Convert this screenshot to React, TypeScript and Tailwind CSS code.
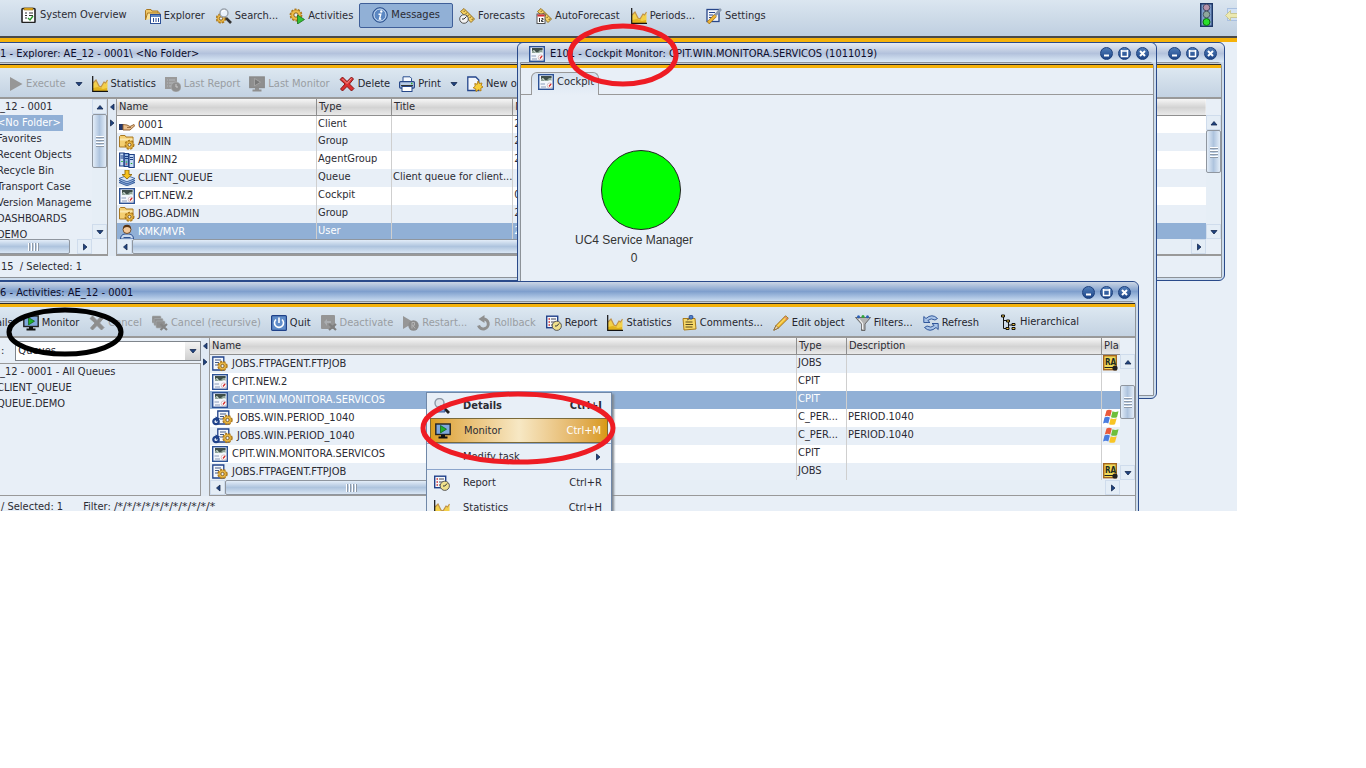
import type { ReactNode } from "react";
import clsx from "clsx";

/* ---------- icons ---------- */

function Svg({ children, w = 16, h = 16 }: { children: ReactNode; w?: number; h?: number }) {
  return (
    <svg width={w} height={h} viewBox={`0 0 ${w} ${h}`} fill="none" className="shrink-0" aria-hidden="true">
      {children}
    </svg>
  );
}

function Gear({ cx, cy, r = 4 }: { cx: number; cy: number; r?: number }) {
  return (
    <g>
      <circle cx={cx} cy={cy} r={r} stroke="#a8741a" strokeWidth="2.4" strokeDasharray="2 1.2" />
      <circle cx={cx} cy={cy} r={r - 0.2} fill="#eebc4a" stroke="#c28d22" strokeWidth="0.8" />
      <circle cx={cx} cy={cy} r={r / 2.4} fill="#e8eef5" stroke="#7a5513" strokeWidth="0.9" />
    </g>
  );
}

const OverviewIcon = () => (
  <Svg>
    <rect x="1" y="1.5" width="13" height="14" rx="1" fill="#fff" stroke="#222" strokeWidth="1.6" />
    <path d="M3 1h9v2H3z" fill="#f0b41c" stroke="#8a6410" strokeWidth=".6" />
    <path d="M4 6h2M8 6h4M4 8.5h2M8 8.5h4M4 11h2" stroke="#333" strokeWidth="1.2" />
    <path d="M7 11l2 2 3-4" stroke="#2b9a2b" strokeWidth="1.4" />
  </Svg>
);

const ExplorerIcon = () => (
  <Svg>
    <path d="M.5 12V2.5l1-1H6l1 1.5h6v3" fill="#f0c766" stroke="#a97822" />
    <path d="M.5 12l2-7H15l-1 4" fill="#fbe39a" stroke="#a97822" />
    <rect x="5.5" y="6.5" width="10" height="9" fill="#fff" stroke="#2c4f96" />
    <path d="M6 8h9" stroke="#5d86c4" strokeWidth="2" />
    <path d="M8.5 10v4M11 10v4M13.500 10v4" stroke="#2c4f96" />
  </Svg>
);

const SearchIcon = () => (
  <Svg>
    <Gear cx={5} cy={10.5} r={4} />
    <path d="M10 10l5 5" stroke="#333" strokeWidth="2.6" />
    <circle cx="8" cy="5" r="4" fill="#eaf2fb" stroke="#9aa3ad" strokeWidth="1.4" />
    <path d="M6 4q1-2 3-1.500" stroke="#fff" strokeWidth="1.2" />
  </Svg>
);

const ActivitiesIcon = () => (
  <Svg>
    <Gear cx={7} cy={7} r={5.2} />
    <path d="M8.500 7l7 4.500-7 4.500z" fill="#35c235" stroke="#1a6e1a" strokeWidth=".8" />
  </Svg>
);

const InfoIcon = () => (
  <Svg>
    <circle cx="8" cy="8" r="7.300" fill="#5b87c2" stroke="#2c4f8a" />
    <circle cx="8" cy="8" r="6" stroke="#dbe8f7" strokeWidth=".9" />
    <circle cx="9.300" cy="4.500" r="1.200" fill="#fff" />
    <path d="M6.500 7.200h2.300L7.500 12h1.700" stroke="#fff" strokeWidth="1.400" />
  </Svg>
);

const Ruler = () => (
  <g>
    <path d="M1.500 3.500L5 .5 15.500 11l-3.500 3.500z" fill="#f3cf62" stroke="#8f6a1c" strokeWidth=".9" />
    <path d="M6 2.500L4.700 4M8 4.500L6.700 6M10 6.500L8.700 8M12 8.500L10.700 10M14 10.500L12.700 12" stroke="#6b4e12" strokeWidth=".9" />
  </g>
);

const ForecastIcon = () => (
  <Svg>
    <Ruler />
    <circle cx="5" cy="11" r="4.300" fill="#f2f2f2" stroke="#555" />
    <path d="M5 11l2.500-2.500M5 11H3" stroke="#333" />
  </Svg>
);

const AutoForecastIcon = () => (
  <Svg>
    <Ruler />
    <rect x="1" y="6" width="8" height="9.500" fill="#fff" stroke="#444" strokeWidth=".9" />
    <path d="M1.400 7.500h7.200" stroke="#d62f2f" strokeWidth="2" />
    <path d="M3.500 10v4M5.500 10.500h1.500v1.500H5.500v1.500H7.500" stroke="#333" />
  </Svg>
);

const ChartIcon = () => (
  <Svg>
    <path d="M1 15V7l3-3 3 6 2 1 3-5 1.500 1L15.500 4v11z" fill="#f3d04a" />
    <path d="M1 7l3-3 3 6 2 1 3-5 1.500 1L15.500 4" stroke="#c0934a" strokeWidth="1.200" />
    <path d="M1 12l5-1 5 2 4-1v3H1z" fill="#e2b31c" />
    <path d="M.7 0v15.400H16" stroke="#111" strokeWidth="1.200" />
  </Svg>
);

const SettingsIcon = () => (
  <Svg>
    <rect x="1" y="1.500" width="12" height="12" fill="#f4f7fb" stroke="#27468a" strokeWidth="1.300" />
    <path d="M3 4.500h6M3 7h4M3 9.500h3" stroke="#27468a" />
    <path d="M15 1L8 8.500" stroke="#8a99ad" strokeWidth="2.600" />
    <path d="M9.500 7.500L2 15" stroke="#a8761c" strokeWidth="3.600" />
    <path d="M9.500 7.500L2.500 14.500" stroke="#efb93a" strokeWidth="2.200" />
  </Svg>
);

const TrafficLight = () => (
  <Svg w={13} h={24}>
    <rect x=".75" y=".75" width="11.500" height="22.500" fill="#7d9cc9" stroke="#1f3868" strokeWidth="1.500" />
    <circle cx="6.500" cy="4.500" r="3.300" fill="#b592a8" stroke="#4b4b66" />
    <circle cx="6.500" cy="11.500" r="3.300" fill="#8ea79c" stroke="#4b5b66" />
    <circle cx="6.500" cy="19" r="3.500" fill="#2be02b" stroke="#0b6e0b" />
  </Svg>
);

const LogoutIcon = () => (
  <Svg>
    <rect x="2.500" y="1.500" width="14" height="12" fill="#d3e2f4" stroke="#a9c0e0" />
    <path d="M.5 8.500L5.500 3.500v3H15v4H5.500v3z" fill="#ece9b0" stroke="#c9c793" />
  </Svg>
);

const PlayIcon = () => (
  <Svg w={14}>
    <path d="M1 1l12.500 7L1 15z" fill="#979797" />
  </Svg>
);

function ReportIcon({ off }: { off?: boolean }) {
  if (off)
    return (
      <Svg>
        <rect x="0" y="1" width="12" height="12" fill="#9a9a9a" />
        <path d="M2 4h1M4 4h6M2 7h1M4 7h5M2 10h1M4 10h3" stroke="#b4b8bc" />
        <circle cx="11" cy="11" r="5" fill="#8f8f8f" stroke="#b5b8bb" strokeWidth=".6" />
        <path d="M11 8v3h2" stroke="#c8c8c8" />
      </Svg>
    );
  return (
    <Svg>
      <rect x=".7" y="1.200" width="11" height="11.500" fill="#f6f9fd" stroke="#20408a" strokeWidth="1.400" />
      <path d="M2.500 4h1.500M2.500 7h1.500M2.500 10h1.500" stroke="#d03030" strokeWidth="1.400" />
      <path d="M5 4h5M5 7h4M5 10h2" stroke="#445" />
      <circle cx="10.800" cy="10.800" r="4.600" fill="#efe08c" stroke="#5a5a5a" />
      <path d="M10.800 11l2.400-2.600M10.800 11H9" stroke="#333" />
    </Svg>
  );
}

function MonitorIcon({ off }: { off?: boolean }) {
  return (
    <Svg>
      <rect x=".8" y="1" width="14.400" height="10.500" fill={off ? "#8f8f8f" : "#7fa8dc"} stroke={off ? "#8a8a8a" : "#222"} strokeWidth="1.400" />
      <path d="M5.500 2.500l6 3.700-6 3.700z" fill={off ? "#777" : "#1fb02a"} stroke={off ? "#b0b0b0" : "#0b5a14"} strokeWidth=".7" />
      <path d="M6 12h4v1.500h2.500V15.500h-9V13.500H6z" fill={off ? "#8f8f8f" : "#111"} />
    </Svg>
  );
}

function CrossIcon({ off }: { off?: boolean }) {
  return (
    <Svg>
      <path
        d="M1 3.500L3.500 1 8 5.500 12.500 1l2 2L10.500 8l4.500 4.500-2.500 2.500L8 10.500 3.500 15 1.500 13 6 8z"
        fill={off ? "#8e8e8e" : "#dc2f2f"}
        stroke={off ? "#8e8e8e" : "#7d1111"}
        strokeWidth=".9"
      />
      {!off && <path d="M3.500 3L8 7.500 12.500 2.500" stroke="#f49a92" />}
    </Svg>
  );
}

const PrintIcon = () => (
  <Svg>
    <path d="M4 6V.8h7l1.500 1.500V6" fill="#f5f9fe" stroke="#2a4f8f" />
    <rect x=".6" y="5.600" width="14.800" height="6.500" rx="1" fill="#b8cbe4" stroke="#27488a" strokeWidth="1.200" />
    <path d="M2 9.500h12" stroke="#333" />
    <rect x="3" y="10.500" width="10" height="5" fill="#fff" stroke="#27488a" />
    <path d="M12 7.500h1.500" stroke="#2fb12f" strokeWidth="1.300" />
  </Svg>
);

const NewIcon = () => (
  <Svg>
    <path d="M.8 1h8l3 3v10.500H.8z" fill="#f2f6fc" stroke="#24468c" strokeWidth="1.300" />
    <path d="M11 5l1.300 2.500 2.700-.5-.8 2.500 1.800 1.500-2.200 1.200.2 2.800-2.500-1.300L9 15.500l-.3-2.700-2.500-1 2-1.600-.4-2.700 2.400.8z" fill="#f7cf3c" stroke="#b17c12" strokeWidth=".9" />
  </Svg>
);

const HandIcon = () => (
  <Svg>
    <path d="M0 7h4v6H0z" fill="#24386b" />
    <path d="M4 7.500l4 .5 3 1.500 4-2 1 1-5 4.500H4z" fill="#e9bf8e" stroke="#8a5a2b" strokeWidth=".9" />
    <path d="M8 10.500h4" stroke="#8a5a2b" strokeWidth=".8" />
  </Svg>
);

const FolderGearIcon = () => (
  <Svg>
    <path d="M.5 13V2.500l1-1H6L7 3h7v10z" fill="#f4cf72" stroke="#a97822" />
    <path d="M1 5.500h12.500" stroke="#fbe7ac" strokeWidth="2" />
    <Gear cx={10.500} cy={10.800} r={3.800} />
  </Svg>
);

const ServersIcon = () => (
  <Svg>
    <path d="M.6 1h4.500v13H.6z" fill="#c9dcf5" stroke="#1d3f85" strokeWidth="1.200" />
    <path d="M5.200 1.500h4.500v13H5.200z" fill="#8fb1e0" stroke="#1d3f85" strokeWidth="1.200" />
    <path d="M10 2.500h5.200v13H10z" fill="#c9dcf5" stroke="#1d3f85" strokeWidth="1.200" />
    <path d="M1.500 4h3M6 4.500h3M11 5.500h3M1.500 6h3M6 6.500h3M11 7.500h3" stroke="#1d3f85" />
    <path d="M3 9v1M7.500 9.500v1M12.500 11v1" stroke="#1fae2b" strokeWidth="1.500" />
    <path d="M7.500 11.500v1" stroke="#d62020" strokeWidth="1.500" />
  </Svg>
);

const QueueIcon = () => (
  <Svg>
    <path d="M0 12.500l8-3 8 3-8 3.300z" fill="#7fa1d2" stroke="#274f92" strokeWidth=".8" />
    <path d="M0 10.500l8-3 8 3-8 3.300z" fill="#a4c0e6" stroke="#274f92" strokeWidth=".8" />
    <path d="M0 8.500l8-3 8 3-8 3.300z" fill="#d5e4f6" stroke="#274f92" strokeWidth=".8" />
    <path d="M6 0h4v4.500h3L8 9 3 4.500h3z" fill="#f5c21f" stroke="#93690c" strokeWidth=".9" />
  </Svg>
);

const CockpitIcon = () => (
  <Svg>
    <rect x=".7" y=".7" width="14.600" height="14.600" fill="#f3f7fc" stroke="#2c5296" strokeWidth="1.400" />
    <rect x="3" y="2" width="10.500" height="5" fill="#8fa398" />
    <path d="M3 2h10.500v2H11L9 6H7L5 4 3 5z" fill="#3f4f49" />
    <path d="M4.500 4l2 2.500M10.500 6.500h3" stroke="#dfe9e2" strokeWidth=".9" />
    <path d="M2.500 10h4.500M3 13h5" stroke="#8b9cba" strokeWidth="1.200" />
    <circle cx="11.800" cy="11.500" r="2.600" fill="#fff" stroke="#c9a9ae" strokeWidth=".7" />
    <path d="M11 12.500l2-2.500" stroke="#d42a2a" strokeWidth="1.300" />
  </Svg>
);

const UserIcon = () => (
  <Svg>
    <path d="M1.500 15q0-4.500 4.500-5h4q4.500.5 4.500 5z" fill="#c9daf0" stroke="#2b4f90" />
    <path d="M4.500 13.500h7" stroke="#2b4f90" />
    <circle cx="8" cy="5.500" r="4" fill="#f3c99b" stroke="#6b4420" strokeWidth=".9" />
    <path d="M4 5Q4 .8 8 .8T12 5Q10.500 3 8 3T4 5z" fill="#5a3514" />
  </Svg>
);

const QuitIcon = () => (
  <Svg>
    <rect x=".6" y=".6" width="14.800" height="14.800" rx="1" fill="#5f8cc9" stroke="#1f4189" strokeWidth="1.200" />
    <path d="M5 4.500a4.500 4.500 0 1 0 6 0" stroke="#fff" strokeWidth="1.600" />
    <path d="M8 2.500V8" stroke="#fff" strokeWidth="1.600" />
  </Svg>
);

const RecursiveIcon = () => (
  <Svg>
    <rect x="0" y="1" width="9" height="7" rx="1" fill="#8f8f8f" stroke="#aaaeb2" strokeWidth=".6" />
    <rect x="2" y="3.500" width="9" height="7" rx="1" fill="#8f8f8f" stroke="#aaaeb2" strokeWidth=".6" />
    <rect x="4" y="6" width="9" height="7" rx="1" fill="#8f8f8f" stroke="#aaaeb2" strokeWidth=".6" />
    <path d="M8.500 9l6.500 6M15 9l-6.500 6" stroke="#858585" strokeWidth="2.200" />
  </Svg>
);

const DeactivateIcon = () => (
  <Svg>
    <rect x="0" y="0" width="14" height="14" rx="1" fill="#959595" />
    <path d="M3 7l3-3v2h4v2H6v3z" fill="#aaadb0" />
    <path d="M8 9l7 6M15 9l-7 6" stroke="#7f7f7f" strokeWidth="2.200" />
  </Svg>
);

const RestartIcon = () => (
  <Svg>
    <path d="M0 1l11 6.500L0 14z" fill="#969696" />
    <circle cx="10.500" cy="10.500" r="5.200" fill="#8b8b8b" />
    <path d="M9 13.500v-6h2.500v2.700H9.500l2.700 3.300" stroke="#b4b4b4" />
  </Svg>
);

const RollbackIcon = () => (
  <Svg w={14}>
    <path d="M1.500 10.500a5 5 0 1 0 4-6.500" stroke="#8f8f8f" strokeWidth="3" />
    <path d="M7.500 0v8L1.500 4z" fill="#8f8f8f" />
  </Svg>
);

const CommentsIcon = () => (
  <Svg w={15}>
    <path d="M1 3.500h12l1 10.500-12 1z" fill="#f7d968" stroke="#a87b1a" />
    <path d="M3.500 7h7M3.500 9.500h7.500M3.500 12h7" stroke="#5b4a1a" />
    <path d="M5 5l3-1.500" stroke="#555" />
    <circle cx="9" cy="2.200" r="2" fill="#4f7fc6" stroke="#1f4189" strokeWidth=".8" />
  </Svg>
);

const PencilIcon = () => (
  <Svg>
    <path d="M.8 15.200L3 10.500 12.500.8l2.800 2.500L5.500 13z" fill="#f4c02c" stroke="#96671b" strokeWidth=".9" />
    <path d="M.8 15.200L3 10.500 5.500 13z" fill="#f0d9b5" stroke="#7a5a2a" strokeWidth=".7" />
    <path d="M11.500 2l2.800 2.500" stroke="#dd7a6a" strokeWidth="1.500" />
    <path d="M4 11.500L13 2.500" stroke="#fbe38c" />
  </Svg>
);

const FunnelIcon = () => (
  <Svg>
    <path d="M.5 2.500h15L10 9v6.500H6.500V9z" fill="#b3b3b3" stroke="#5f5f5f" strokeWidth=".9" />
    <path d="M4 4l3.500 4.500V14" stroke="#f1f1f1" strokeWidth="1.200" />
    <circle cx="3.500" cy="1.800" r="1.500" fill="#2b5fb8" />
    <circle cx="8" cy="1.500" r="1.500" fill="#2fa53a" />
    <circle cx="12.500" cy="1.800" r="1.500" fill="#2b5fb8" />
  </Svg>
);

const RefreshIcon = () => (
  <Svg>
    <path d="M.8 1.500V7.500H7L4.800 5.500Q8 2.500 12 5l2.500-1.500Q9-2 3 3.500z" fill="#a9c4e8" stroke="#234a92" strokeWidth=".9" />
    <path d="M15.200 14.500V8.500H9l2.200 2Q8 13.500 4 11l-2.500 1.500Q7 18 13 12.500z" fill="#a9c4e8" stroke="#234a92" strokeWidth=".9" />
  </Svg>
);

const TreeIcon = () => (
  <Svg>
    <path d="M2.500 3v11.500H5M2.500 6.500h5V11h4M7.500 9.500v5" stroke="#111" />
    <path d="M.5 1h3v2h-3zM5.500 6h3v2h-3zM11 9.500h3v2h-3zM5 13.500h3v2H5zM11 13.500h3v2h-3z" fill="#f2c43a" stroke="#111" />
  </Svg>
);

const DetailsIcon = () => (
  <Svg>
    <path d="M10 10l5 5" stroke="#222" strokeWidth="2.800" />
    <circle cx="5.500" cy="5" r="4.500" fill="#dfe4ea" stroke="#8b96a5" strokeWidth="1.400" />
    <path d="M2 14q0-5 4-6t5 6z" fill="#7da3d6" stroke="#2c4f90" strokeWidth=".9" />
  </Svg>
);

function JobIcon({ loop }: { loop?: boolean }) {
  return (
    <Svg w={loop ? 21 : 16}>
      <g transform={loop ? "translate(5 0)" : undefined}>
        <path d="M.8 14V1h11v13z" fill="#f4f7fc" stroke="#1f4189" strokeWidth="1.300" />
        <path d="M3 4h6M3 6.500h4M3 9h3" stroke="#445a86" />
        <Gear cx={10.500} cy={10} r={4} />
      </g>
      {loop && (
        <>
          <circle cx="4" cy="11.500" r="2.700" fill="#e8eff7" stroke="#1f4189" strokeWidth="2.200" />
          <path d="M3.500 6.500l4.500 2L4 12z" fill="#1f4189" />
        </>
      )}
    </Svg>
  );
}

/* remote agent badge, lettering kept as svg text */
const RaIcon = () => (
  <Svg>
    <rect x=".7" y=".7" width="12.600" height="14" fill="#f1d957" stroke="#a4651f" strokeWidth="1.400" />
    <text x="2" y="10" fontSize="8" fontWeight="700" fill="#1c2b22" fontFamily="DejaVu Sans Condensed">RA</text>
    <path d="M1.500 12.500h9" stroke="#222" />
    <circle cx="12" cy="13" r="2.600" fill="#222" />
  </Svg>
);

const WindowsIcon = () => (
  <Svg>
    <path d="M3.500 1.500Q6 0 8.800 1.500L7.200 7.500Q4.500 6 1.800 7.500z" fill="#ea5a3c" />
    <path d="M9.500 2.200q2.700 1.500 6 0L14 8.200q-2.700 1.300-6 0z" fill="#6fbf3b" />
    <path d="M1.500 8.500q2.700-1.500 5.400 0L5.300 14.500Q2.800 13 0 14.500z" fill="#4a7de0" />
    <path d="M7.700 9.200q2.700 1.500 6 0L12 15.200q-2.900 1.300-5.900 0z" fill="#f8c526" />
  </Svg>
);

type Dir = "up" | "down" | "left" | "right";

const triangles: Record<Dir, string> = {
  up: "M1 6l3-3.500L7 6z",
  down: "M1 2.500h6L4 6z",
  left: "M6 1v6L2.500 4z",
  right: "M2.500 1v6L6 4z",
};

function Tri({ dir }: { dir: Dir }) {
  return (
    <svg width="8" height="8" viewBox="0 0 8 8" className="shrink-0" aria-hidden="true">
      <path d={triangles[dir]} fill="#1f4380" stroke="#16294f" strokeWidth=".8" />
    </svg>
  );
}

/* ---------- window parts ---------- */

function ScrollButton({ dir }: { dir: Dir }) {
  return (
    <button
      type="button"
      aria-label={`Scroll ${dir}`}
      className="flex size-[15px] shrink-0 items-center justify-center border border-[#cfdcec] bg-[#e4edf6]"
    >
      <Tri dir={dir} />
    </button>
  );
}

function VScroll({ gap, thumb }: { gap?: string; thumb: string }) {
  return (
    <div className="flex w-[15px] shrink-0 flex-col bg-[#e6eef6]">
      <ScrollButton dir="up" />
      <div className={clsx("shrink-0", gap)} />
      <div
        className={clsx(
          "flex flex-col items-center justify-center gap-0.5 rounded-xs border border-[#8f969f] bg-linear-to-r from-[#e3edf8] via-[#aec4de] to-[#e3edf8]",
          thumb
        )}
      >
        {[0, 1, 2, 3].map((i) => (
          <div key={i} className="h-px w-2 bg-white shadow-[0_1px_0_#8f9aa8]" />
        ))}
      </div>
      <div className="mt-auto">
        <ScrollButton dir="down" />
      </div>
    </div>
  );
}

function HScroll({ thumb, noLeft }: { thumb: string; noLeft?: boolean }) {
  return (
    <div className="flex h-[15px] min-w-0 flex-1 bg-[#e6eef6]">
      {!noLeft && <ScrollButton dir="left" />}
      <div
        className={clsx(
          "flex items-center justify-center gap-0.5 rounded-xs border border-[#8f969f] bg-linear-to-b from-[#e3edf8] via-[#aec4de] to-[#d9e6f4]",
          thumb
        )}
      >
        {[0, 1, 2, 3].map((i) => (
          <div key={i} className="h-2 w-px bg-white shadow-[1px_0_0_#8f9aa8]" />
        ))}
      </div>
      <div className="ml-auto">
        <ScrollButton dir="right" />
      </div>
    </div>
  );
}

function CaptionButton({ label, children }: { label: string; children: ReactNode }) {
  return (
    <button
      type="button"
      aria-label={label}
      className="flex size-[13px] items-center justify-center rounded-full border border-[#1c3f7c] bg-linear-to-b from-[#4f7cb8] to-[#1d4588]"
    >
      <svg width="9" height="9" viewBox="0 0 9 9" fill="none" stroke="#fff" className="shrink-0" aria-hidden="true">
        {children}
      </svg>
    </button>
  );
}

interface WindowProps {
  title: string;
  icon?: ReactNode;
  active?: boolean;
  titlePad: string;
  className: string;
  children: ReactNode;
}

function Window({ title, icon, active, titlePad, className, children }: WindowProps) {
  return (
    <section
      className={clsx("absolute flex flex-col rounded-md border border-[#2a4a8a] bg-[#cddcec] px-0.5 pb-0.5", className)}
    >
      <header
        className={clsx(
          "-mx-0.5 flex h-[19px] shrink-0 items-center gap-[5px] rounded-t-md bg-linear-to-b pr-[7px] pt-0.5",
          titlePad,
          active
            ? "from-[#ccd6e4] from-0% via-[#7f9fcd] via-50% to-[#c9dcf0]"
            : "from-[#e6ebf3] from-0% via-[#b3c2dc] via-55% to-[#dbeaf7]"
        )}
      >
        {icon}
        <h2 className="flex-1 whitespace-pre pt-px text-[#0d0d2b]">{title}</h2>
        <div className="flex gap-[5px]">
          <CaptionButton label="Minimize">
            <path d="M2 6.500h5" strokeWidth="2" />
          </CaptionButton>
          <CaptionButton label="Maximize">
            <path d="M1.500 2h6M1.500 1v6.500h6V1" strokeWidth="1.500" />
          </CaptionButton>
          <CaptionButton label="Close">
            <path d="M2 2l5 5M7 2L2 7" strokeWidth="2" />
          </CaptionButton>
        </div>
      </header>
      <div className="flex min-h-0 flex-1 flex-col rounded-tr-sm border border-[#8d9298] bg-[#e8eff7]">
        <div className="h-[5px] shrink-0 border-b-3 border-[#f5b20a] bg-linear-to-b from-[#c9ced3] from-50% to-[#2c2c2c] to-50%" />
        {children}
      </div>
    </section>
  );
}

interface Tool {
  label: string;
  icon?: ReactNode;
  off?: boolean;
  menu?: boolean;
}

function Toolbar({ items, className }: { items: Tool[]; className: string }) {
  return (
    <div
      className={clsx(
        "flex h-[31px] shrink-0 items-center overflow-hidden border-b-2 border-[#999] bg-linear-to-b from-[#dde8f1] to-[#c3d2e2] pt-[3px]",
        className
      )}
    >
      {items.map((t) => (
        <button
          key={t.label}
          type="button"
          disabled={t.off}
          className="flex shrink-0 items-center gap-[3px] whitespace-nowrap text-[#26262e] disabled:text-[#999da2]"
        >
          {t.icon}
          {t.label}
          {t.menu && (
            <span className="ml-1.5">
              <Tri dir="down" />
            </span>
          )}
        </button>
      ))}
    </div>
  );
}

function SplitHandle() {
  return (
    <div className="flex w-2 shrink-0 flex-col items-center gap-2 bg-[#e1eaf4] pt-1">
      <Tri dir="left" />
      <Tri dir="right" />
    </div>
  );
}

const headCell = "h-4 overflow-hidden border-b border-l border-[#8f8f8f] pl-0.5 text-left font-normal leading-4 first:border-l-0";
const headFill = "bg-linear-to-b from-[#f6f6f6] via-[#d3d3d3] to-[#ececec]";
const bodyCell = "overflow-hidden whitespace-nowrap border-l border-[#cfcfcf] p-0 pl-px leading-4 align-top first:border-l-0";

function rowClass(i: number, selected: number, even: string, odd: string) {
  if (i === selected) return "bg-[#91b0d6] text-white";
  return i % 2 ? odd : even;
}

/* ---------- data ---------- */

const mainTools: Tool[] = [
  { label: "Explorer", icon: <ExplorerIcon /> },
  { label: "Search...", icon: <SearchIcon /> },
  { label: "Activities", icon: <ActivitiesIcon /> },
];

const planTools: Tool[] = [
  { label: "Forecasts", icon: <ForecastIcon /> },
  { label: "AutoForecast", icon: <AutoForecastIcon /> },
  { label: "Periods...", icon: <ChartIcon /> },
  { label: "Settings", icon: <SettingsIcon /> },
];

const explorerTools: Tool[] = [
  { label: "Execute", icon: <PlayIcon />, off: true, menu: true },
  { label: "Statistics", icon: <ChartIcon /> },
  { label: "Last Report", icon: <ReportIcon off />, off: true },
  { label: "Last Monitor", icon: <MonitorIcon off />, off: true },
  { label: "Delete", icon: <CrossIcon /> },
  { label: "Print", icon: <PrintIcon />, menu: true },
  { label: "New object", icon: <NewIcon /> },
];

const activityTools: Tool[] = [
  { label: "ails" },
  { label: "Monitor", icon: <MonitorIcon /> },
  { label: "Cancel", icon: <CrossIcon off />, off: true },
  { label: "Cancel (recursive)", icon: <RecursiveIcon />, off: true },
  { label: "Quit", icon: <QuitIcon /> },
  { label: "Deactivate", icon: <DeactivateIcon />, off: true },
  { label: "Restart...", icon: <RestartIcon />, off: true },
  { label: "Rollback", icon: <RollbackIcon />, off: true },
  { label: "Report", icon: <ReportIcon /> },
  { label: "Statistics", icon: <ChartIcon /> },
  { label: "Comments...", icon: <CommentsIcon /> },
  { label: "Edit object", icon: <PencilIcon /> },
  { label: "Filters...", icon: <FunnelIcon /> },
  { label: "Refresh", icon: <RefreshIcon /> },
];

const folders = [
  "<No Folder>",
  "Favorites",
  "Recent Objects",
  "Recycle Bin",
  "Transport Case",
  "Version Managemen",
  "DASHBOARDS",
  "DEMO",
];

const objects = [
  { name: "0001", type: "Client", title: "", mod: "2", icon: <HandIcon /> },
  { name: "ADMIN", type: "Group", title: "", mod: "2", icon: <FolderGearIcon /> },
  { name: "ADMIN2", type: "AgentGroup", title: "", mod: "2", icon: <ServersIcon /> },
  { name: "CLIENT_QUEUE", type: "Queue", title: "Client queue for client...", mod: "", icon: <QueueIcon /> },
  { name: "CPIT.NEW.2", type: "Cockpit", title: "", mod: "0", icon: <CockpitIcon /> },
  { name: "JOBG.ADMIN", type: "Group", title: "", mod: "2", icon: <FolderGearIcon /> },
  { name: "KMK/MVR", type: "User", title: "", mod: "2", icon: <UserIcon /> },
];

const tasks = [
  { name: "JOBS.FTPAGENT.FTPJOB", type: "JOBS", desc: "", icon: <JobIcon />, platform: <RaIcon /> },
  { name: "CPIT.NEW.2", type: "CPIT", desc: "", icon: <CockpitIcon /> },
  { name: "CPIT.WIN.MONITORA.SERVICOS", type: "CPIT", desc: "", icon: <CockpitIcon /> },
  { name: "JOBS.WIN.PERIOD_1040", type: "C_PER...", desc: "PERIOD.1040", icon: <JobIcon loop />, platform: <WindowsIcon /> },
  { name: "JOBS.WIN.PERIOD_1040", type: "C_PER...", desc: "PERIOD.1040", icon: <JobIcon loop />, platform: <WindowsIcon /> },
  { name: "CPIT.WIN.MONITORA.SERVICOS", type: "CPIT", desc: "", icon: <CockpitIcon /> },
  { name: "JOBS.FTPAGENT.FTPJOB", type: "JOBS", desc: "", icon: <JobIcon />, platform: <RaIcon /> },
];

/* ---------- windows ---------- */

function ExplorerWindow() {
  return (
    <Window
      title={"1 - Explorer: AE_12 - 0001\\ <No Folder>"}
      titlePad="pl-[7px]"
      className="-left-2 right-3 top-[42px] h-[239px]"
    >
      <Toolbar items={explorerTools} className="gap-[9px] pl-[13px]" />
      <div className="flex h-[157px] shrink-0">
        <div className="flex w-[112px] shrink-0 flex-col border-b-2 border-r border-[#999]">
          <div className="flex min-h-0 flex-1">
            <ul className="min-w-0 flex-1 overflow-hidden whitespace-nowrap leading-4">
              <li className="pl-1">_12 - 0001</li>
              {folders.map((f, i) => (
                <li key={f} className="pl-px">
                  <span className={clsx("inline-block", i === 0 && "bg-[#91b0d6] pr-0.5 text-white")}>{f}</span>
                </li>
              ))}
            </ul>
            <VScroll thumb="h-[54px]" />
          </div>
          <div className="flex">
            <HScroll thumb="w-[74px]" noLeft />
            <div className="w-[15px]" />
          </div>
        </div>
        <SplitHandle />
        <div className="flex min-w-0 flex-1 flex-col border-b-2 border-l border-[#999]">
          <div className="flex min-h-0 flex-1">
            <table className="min-w-0 flex-1 table-fixed border-separate border-spacing-0 self-start bg-white">
              <colgroup>
                <col className="w-[199px]" />
                <col className="w-[75px]" />
                <col className="w-[120px]" />
                <col />
              </colgroup>
              <thead className={headFill}>
                <tr>
                  {["Name", "Type", "Title", "M"].map((h) => (
                    <th key={h} className={headCell}>{h}</th>
                  ))}
                </tr>
              </thead>
              <tbody>
                {objects.map((o, i) => (
                  <tr
                    key={o.name}
                    className={clsx("h-[18px] first:h-[17px]", rowClass(i, 6, "bg-white", "bg-[#e8eff7]"))}
                  >
                    <td className={bodyCell}>
                      <div className="flex items-center gap-[3px] pl-px pt-px">
                        {o.icon}
                        {o.name}
                      </div>
                    </td>
                    <td className={bodyCell}>{o.type}</td>
                    <td className={bodyCell}>{o.title}</td>
                    <td className={bodyCell}>{o.mod}</td>
                  </tr>
                ))}
              </tbody>
            </table>
            <div className="flex pt-4">
              <VScroll thumb="h-[43px]" />
            </div>
          </div>
          <div className="flex">
            <HScroll thumb="w-[900px]" />
            <div className="w-[15px]" />
          </div>
        </div>
      </div>
      <footer className="flex flex-1 items-center whitespace-pre pl-[5px]">15  / Selected: 1</footer>
    </Window>
  );
}

function CockpitWindow() {
  return (
    <Window
      title="E101 - Cockpit Monitor: CPIT.WIN.MONITORA.SERVICOS (1011019)"
      icon={<CockpitIcon />}
      titlePad="pl-[11px]"
      className="left-[517px] top-[42px] h-[357px] w-[640px]"
    >
      <div className="flex h-[27px] items-end" role="tablist">
        <div className="w-2.5 border-b border-[#999]" />
        <button
          type="button"
          role="tab"
          aria-selected="true"
          className="flex h-[23px] w-[68px] items-center gap-[3px] rounded-t-md border border-b-0 border-[#999] bg-linear-to-b from-[#d6e2ef] to-[#e8eff7] pb-1 pl-1.5"
        >
          <CockpitIcon />
          Cockpit
        </button>
        <div className="flex-1 border-b border-[#999]" />
      </div>
      <div className="flex flex-col items-start pl-[53px] pt-[54px]">
        <figure className="flex w-[120px] flex-col items-center font-['Liberation_Sans',Arial,sans-serif] text-[12px] leading-[18px] text-[#333]">
          <svg width="82" height="82" viewBox="0 0 82 82" className="ml-3.5" aria-hidden="true">
            <circle cx="41" cy="41" r="39.500" fill="#0f0" stroke="#222" />
          </svg>
          <figcaption className="whitespace-nowrap text-center">
            UC4 Service Manager
            <br />0
          </figcaption>
        </figure>
      </div>
    </Window>
  );
}

function ActivitiesWindow() {
  return (
    <Window
      title="6 - Activities: AE_12 - 0001"
      titlePad="pl-[7px]"
      active
      className="-left-2 right-[98px] top-[281px] h-[250px]"
    >
      <div className="relative">
        <Toolbar items={activityTools} className="gap-2.5" />
        <button type="button" className="absolute right-14 top-[7px] flex items-center gap-[3px] text-[#26262e]">
          <TreeIcon />
          Hierarchical
        </button>
      </div>
      <div className="flex h-[158px] shrink-0">
        <div className="flex w-[205px] shrink-0 flex-col">
          <div className="flex h-[25px] items-center gap-[11px] pl-[5px]">
            <label htmlFor="view">:</label>
            <div className="relative flex-1">
              <select
                id="view"
                className="h-5 w-full appearance-none border border-[#7f858c] bg-white pl-0.5 text-[11px] text-[#26262e]"
              >
                <option>Queues</option>
              </select>
              <span className="pointer-events-none absolute inset-y-px right-px flex w-[15px] items-center justify-center bg-linear-to-b from-[#f4f4f4] to-[#cfcfcf]">
                <Tri dir="down" />
              </span>
            </div>
          </div>
          <ul className="flex-1 border border-l-0 border-[#999] leading-4">
            <li className="pl-1">_12 - 0001 - All Queues</li>
            <li className="pl-px">CLIENT_QUEUE</li>
            <li className="pl-px">QUEUE.DEMO</li>
          </ul>
        </div>
        <SplitHandle />
        <div className="flex min-w-0 flex-1 flex-col border-b border-l border-[#999]">
          <div className="flex min-h-0 flex-1">
            <table className="min-w-0 flex-1 table-fixed border-separate border-spacing-0 self-start bg-white">
              <colgroup>
                <col />
                <col className="w-[50px]" />
                <col className="w-[255px]" />
                <col className="w-[19px]" />
              </colgroup>
              <thead className={headFill}>
                <tr>
                  {["Name", "Type", "Description", "Pla"].map((h) => (
                    <th key={h} className={headCell}>{h}</th>
                  ))}
                </tr>
              </thead>
              <tbody>
                {tasks.map((t, i) => (
                  <tr key={i} className={clsx("h-[18px]", rowClass(i, 2, "bg-[#e8eff7]", "bg-white"))}>
                    <td className={bodyCell}>
                      <div className="flex items-center gap-1 pl-px pt-px">
                        {t.icon}
                        {t.name}
                      </div>
                    </td>
                    <td className={bodyCell}>{t.type}</td>
                    <td className={bodyCell}>{t.desc}</td>
                    <td className={bodyCell}>{t.platform}</td>
                  </tr>
                ))}
              </tbody>
            </table>
            <div className="flex pt-4">
              <VScroll gap="h-4" thumb="h-[34px]" />
            </div>
          </div>
          <div className="flex">
            <HScroll thumb="w-[252px]" />
            <div className="w-[15px]" />
          </div>
        </div>
      </div>
      <footer className="flex h-[21px] items-center gap-5 pl-[5px]">
        <span>/ Selected: 1</span>
        <span>
          Filter: <span className="font-['DejaVu_Sans',sans-serif]">/*/*/*/*/*/*/*/*/*/*/*</span>
        </span>
      </footer>
    </Window>
  );
}

function MenuItem({ icon, label, keys, className }: { icon?: ReactNode; label: string; keys?: ReactNode; className?: string }) {
  return (
    <button
      type="button"
      role="menuitem"
      className={clsx("flex h-[25px] w-full items-center pl-1 pr-1.5 text-left", className)}
    >
      <span className="w-[29px]">{icon}</span>
      <span className="flex-1">{label}</span>
      {keys}
    </button>
  );
}

function ContextMenu() {
  return (
    <div
      role="menu"
      className="absolute left-[426px] top-[392px] w-[186px] border border-[#7088a8] bg-[#e8eff7] px-[3px] shadow-[2px_2px_2px_#7f8790]"
    >
      <MenuItem icon={<DetailsIcon />} label="Details" keys="Ctrl+I" className="font-bold" />
      <MenuItem
        icon={<MonitorIcon />}
        label="Monitor"
        keys={<span className="text-white">Ctrl+M</span>}
        className="border border-[#7a6a3a] bg-linear-to-r from-[#dc9f1b] via-[#f7e8c4] to-[#d9990f]"
      />
      <hr className="-mx-[3px] border-[#8ba5cc]" />
      <MenuItem label="Modify task" keys={<Tri dir="right" />} />
      <hr className="-mx-[3px] border-[#8ba5cc]" />
      <MenuItem icon={<ReportIcon />} label="Report" keys="Ctrl+R" />
      <MenuItem icon={<ChartIcon />} label="Statistics" keys="Ctrl+H" />
    </div>
  );
}

/* hand-drawn style highlight rings */
function Ring({ className, rx, ry, color }: { className: string; rx: number; ry: number; color: string }) {
  const w = rx * 2 + 6;
  const h = ry * 2 + 6;
  return (
    <svg width={w} height={h} viewBox={`0 0 ${w} ${h}`} className={clsx("pointer-events-none absolute", className)} aria-hidden="true">
      <ellipse cx={w / 2} cy={h / 2} rx={rx} ry={ry} fill="none" stroke={color} strokeWidth="5" />
    </svg>
  );
}

function MainTools({ items }: { items: Tool[] }) {
  return (
    <div className="flex items-center gap-[11px] pt-0.5">
      {items.map((t) => (
        <button key={t.label} type="button" className="flex items-center gap-[3px] whitespace-nowrap">
          {t.icon}
          {t.label}
        </button>
      ))}
    </div>
  );
}

export default function App() {
  return (
    <div className="min-h-screen bg-white font-['DejaVu_Sans_Condensed','Noto_Sans',sans-serif] text-[11px] leading-[16px] text-[#2b2b33]">
      <main className="relative h-[511px] w-full max-w-[1237px] overflow-hidden bg-[#e8eff7]">
        <nav className="flex h-[42px] items-start overflow-hidden border-b-4 border-[#f5b20a] bg-[#c3d2e2]">
          <div className="flex h-[38px] w-full shrink-0 items-center border-b-2 border-[#4a4a4a] bg-linear-to-b from-[#dbe6f0] to-[#bfcfe0] pb-1.5 pl-[21px]">
            <button type="button" className="mr-[18px] flex items-center gap-[3px] whitespace-nowrap">
              <OverviewIcon />
              System Overview
            </button>
            <MainTools items={mainTools} />
            <button
              type="button"
              className="mx-1.5 flex h-[25px] items-center gap-[3px] rounded-xs border border-[#3f5f99] bg-[#91b0d6] px-3"
            >
              <InfoIcon />
              Messages
            </button>
            <MainTools items={planTools} />
            <div className="-mr-1 ml-auto flex shrink-0 items-center gap-3">
              <TrafficLight />
              <LogoutIcon />
            </div>
          </div>
        </nav>

        <ExplorerWindow />
        <CockpitWindow />
        <ActivitiesWindow />
        <ContextMenu />

        <Ring className="left-[567px] top-[23px]" rx={53} ry={29} color="#ee1c24" />
        <Ring className="left-[420px] top-[391px]" rx={95} ry={34} color="#ee1c24" />
        <Ring className="left-[6px] top-[307px]" rx={56} ry={22} color="#000" />
      </main>
    </div>
  );
}
